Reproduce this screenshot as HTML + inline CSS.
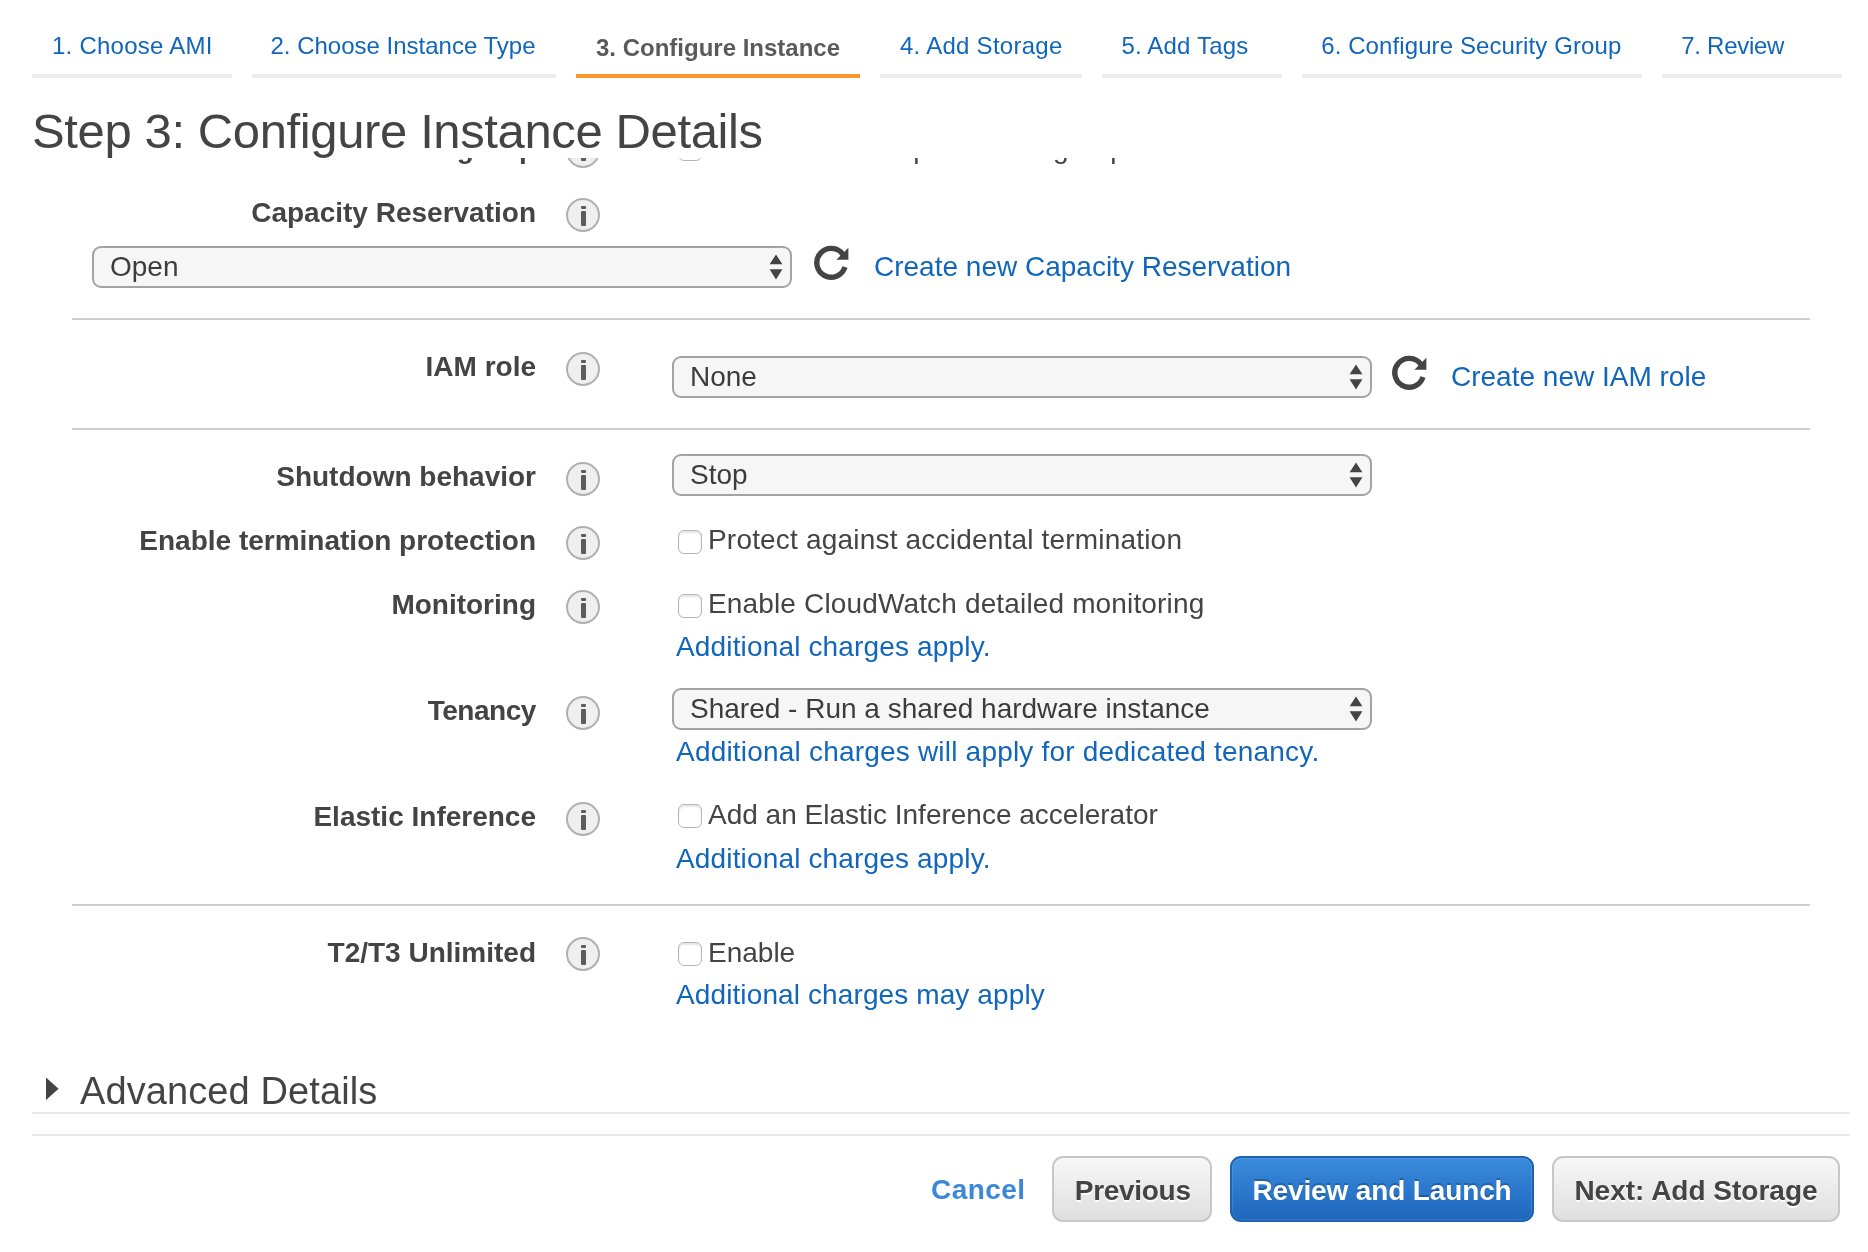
<!DOCTYPE html>
<html>
<head>
<meta charset="utf-8">
<title>Step 3: Configure Instance Details</title>
<style>
*{box-sizing:border-box;margin:0;padding:0}
html,body{width:1868px;height:1252px;overflow:hidden;background:#fff}
body{position:relative;will-change:transform;font-family:"Liberation Sans",sans-serif;font-size:28px;color:#444;-webkit-font-smoothing:antialiased}
.abs,.t,.tab,.lbl,.ico,.sel,.cb,.lnk,.hr,.rf,.btn{position:absolute}
.t,.lnk,.lbl,.tab span{white-space:nowrap;line-height:1}
/* tabs */
.tab{top:0;height:78px;border-bottom:4px solid #ececec;color:#1166bb;font-size:24px}
.tab span{position:absolute;left:20px;top:34px}
.tab.on{border-bottom-color:#fa962a;color:#5a5a5a;font-weight:bold}
.tab.on span{top:36px}
h1{position:absolute;left:32px;top:107px;letter-spacing:-.38px;font-size:49px;font-weight:normal;line-height:1;color:#444;white-space:nowrap;z-index:3}
/* clipped scrolling area */
#scroll{position:absolute;left:0;top:158px;width:1868px;height:900px;overflow:hidden}
#in{position:absolute;left:0;top:-158px;width:1868px;height:1252px}
.lbl{right:1332px;font-weight:bold;color:#444;font-size:28px}
.ico{left:565.7px;width:34.6px;height:34.6px;margin-top:-.3px;border-radius:50%;border:2px solid #b0b0b0;background:#efefef;filter:blur(.4px)}
.ico:before{content:"";position:absolute;left:13.4px;top:5.9px;width:4.8px;height:3px;background:#5c5c5c;border-radius:1px}
.ico:after{content:"";position:absolute;left:13.4px;top:11.3px;width:4.8px;height:14.6px;background:#5c5c5c;border-radius:1px}
.sel{width:700px;height:42px;border:2px solid #a3a3a3;border-radius:9px;background:#f6f6f6;color:#3c3c3c}
.sel span{position:absolute;left:16px;top:5px;line-height:1;white-space:nowrap}
.sel svg{position:absolute;right:7.5px;top:6.3px}
.cb{left:678px;width:24px;height:24px;border:1.5px solid #b5b5b5;border-radius:6px;background:#fff;box-shadow:inset 0 2px 2px rgba(0,0,0,.10)}
.t{color:#444}
.lnk{color:#1166bb;left:676px}
.hr{left:72px;width:1738px;height:2px;background:#cdcdcd}
.rf{width:36px;height:36px}
.btn{top:1156px;height:66px;border-radius:11px;font-weight:bold;text-align:center;line-height:65px;white-space:nowrap}
.btn.g{border:2px solid #c7c7c7;background:linear-gradient(#f7f7f7,#dfdfdf);color:#444;text-shadow:0 2px 0 #fff}
.btn.b{border:2px solid #1b62b5;background:linear-gradient(#3a8bdb,#1d66bd);color:#fff;text-shadow:0 -2px 0 rgba(0,0,0,.22);box-shadow:inset 0 0 0 1px rgba(255,255,255,.12)}
</style>
</head>
<body>

<!-- wizard tabs -->
<div class="tab" style="left:32px;width:200px"><span style="letter-spacing:.25px">1. Choose AMI</span></div>
<div class="tab" style="left:252px;width:304px"><span style="left:18.5px">2. Choose Instance Type</span></div>
<div class="tab on" style="left:576px;width:284px"><span>3. Configure Instance</span></div>
<div class="tab" style="left:880px;width:202px"><span style="letter-spacing:.27px">4. Add Storage</span></div>
<div class="tab" style="left:1102px;width:180px"><span style="left:19.5px;letter-spacing:.17px">5. Add Tags</span></div>
<div class="tab" style="left:1302px;width:340px"><span style="left:19.2px;letter-spacing:.1px">6. Configure Security Group</span></div>
<div class="tab" style="left:1662px;width:180px"><span style="left:19.3px;letter-spacing:-.29px">7. Review</span></div>

<h1>Step 3: Configure Instance Details</h1>

<div id="scroll"><div id="in">

<!-- placement group (mostly scrolled away) -->
<div class="lbl" style="top:135px">Placement group</div>
<div class="ico" style="top:133.5px"></div>
<div class="cb" style="top:137px"></div>
<div class="t" style="left:708px;top:135px;letter-spacing:.28px">Add instance to placement group</div>

<!-- capacity reservation -->
<div class="lbl" style="top:199px">Capacity Reservation</div>
<div class="ico" style="top:198px"></div>
<div class="sel" style="left:92px;top:246px"><span>Open</span>
<svg width="14" height="26" viewBox="0 0 14 26"><path d="M7 0.4 13.4 10.3H0.6zM0.6 15.2H13.4L7 25.5z" fill="#444"/></svg></div>
<svg class="rf" style="left:814px;top:245px" viewBox="0 0 36 36"><path d="M28.85 9.34A14.4 14.4 0 1 0 30.97 22.01" fill="none" stroke="#444" stroke-width="5.4"/><path d="M34.4 2.7V14.7H22.4z" fill="#444"/></svg>
<div class="lnk" style="left:874px;top:253px">Create new Capacity Reservation</div>

<div class="hr" style="top:318px"></div>

<!-- IAM role -->
<div class="lbl" style="top:353px">IAM role</div>
<div class="ico" style="top:352px"></div>
<div class="sel" style="left:672px;top:356px"><span>None</span>
<svg width="14" height="26" viewBox="0 0 14 26"><path d="M7 0.4 13.4 10.3H0.6zM0.6 15.2H13.4L7 25.5z" fill="#444"/></svg></div>
<svg class="rf" style="left:1392px;top:355px" viewBox="0 0 36 36"><path d="M28.85 9.34A14.4 14.4 0 1 0 30.97 22.01" fill="none" stroke="#444" stroke-width="5.4"/><path d="M34.4 2.7V14.7H22.4z" fill="#444"/></svg>
<div class="lnk" style="left:1451px;top:363px">Create new IAM role</div>

<div class="hr" style="top:428px"></div>

<!-- shutdown behavior -->
<div class="lbl" style="top:462.7px">Shutdown behavior</div>
<div class="ico" style="top:462px"></div>
<div class="sel" style="left:672px;top:454px"><span>Stop</span>
<svg width="14" height="26" viewBox="0 0 14 26"><path d="M7 0.4 13.4 10.3H0.6zM0.6 15.2H13.4L7 25.5z" fill="#444"/></svg></div>

<!-- termination protection -->
<div class="lbl" style="top:527px">Enable termination protection</div>
<div class="ico" style="top:526px"></div>
<div class="cb" style="top:530px"></div>
<div class="t" style="left:708px;top:526px;letter-spacing:.19px">Protect against accidental termination</div>

<!-- monitoring -->
<div class="lbl" style="top:591px">Monitoring</div>
<div class="ico" style="top:590px"></div>
<div class="cb" style="top:594px"></div>
<div class="t" style="left:708px;top:590px;letter-spacing:.15px">Enable CloudWatch detailed monitoring</div>
<div class="lnk" style="top:633px;letter-spacing:.155px">Additional charges apply.</div>

<!-- tenancy -->
<div class="lbl" style="top:697px;letter-spacing:-.45px">Tenancy</div>
<div class="ico" style="top:696px"></div>
<div class="sel" style="left:672px;top:688px"><span>Shared - Run a shared hardware instance</span>
<svg width="14" height="26" viewBox="0 0 14 26"><path d="M7 0.4 13.4 10.3H0.6zM0.6 15.2H13.4L7 25.5z" fill="#444"/></svg></div>
<div class="lnk" style="top:738px;letter-spacing:.2px">Additional charges will apply for dedicated tenancy.</div>

<!-- elastic inference -->
<div class="lbl" style="top:803px">Elastic Inference</div>
<div class="ico" style="top:802px"></div>
<div class="cb" style="top:804px"></div>
<div class="t" style="left:708px;top:801px">Add an Elastic Inference accelerator</div>
<div class="lnk" style="top:845px;letter-spacing:.155px">Additional charges apply.</div>

<div class="hr" style="top:904px"></div>

<!-- T2/T3 unlimited -->
<div class="lbl" style="top:939px">T2/T3 Unlimited</div>
<div class="ico" style="top:937px"></div>
<div class="cb" style="top:942px"></div>
<div class="t" style="left:708px;top:939px">Enable</div>
<div class="lnk" style="top:981px;letter-spacing:.11px">Additional charges may apply</div>

</div></div>

<!-- advanced details -->
<svg class="abs" style="left:46px;top:1077px" width="14" height="24" viewBox="0 0 14 24"><path d="M0 0.5 12.6 11.8 0 23z" fill="#444"/></svg>
<div class="t" style="left:80px;top:1072px;font-size:38px;letter-spacing:.1px">Advanced Details</div>
<div class="abs" style="left:32px;top:1112px;width:1818px;height:2px;background:#e8e8e8"></div>
<div class="abs" style="left:32px;top:1134px;width:1818px;height:2px;background:#e8e8e8"></div>

<!-- buttons -->
<div class="t" style="left:931px;top:1176px;color:#3b88d8;font-weight:bold;letter-spacing:.45px">Cancel</div>
<div class="btn g" style="left:1052px;width:160px;letter-spacing:-.3px;padding-left:1.5px">Previous</div>
<div class="btn b" style="left:1230px;width:304px;letter-spacing:-.13px">Review and Launch</div>
<div class="btn g" style="left:1552px;width:288px">Next: Add Storage</div>

</body>
</html>
